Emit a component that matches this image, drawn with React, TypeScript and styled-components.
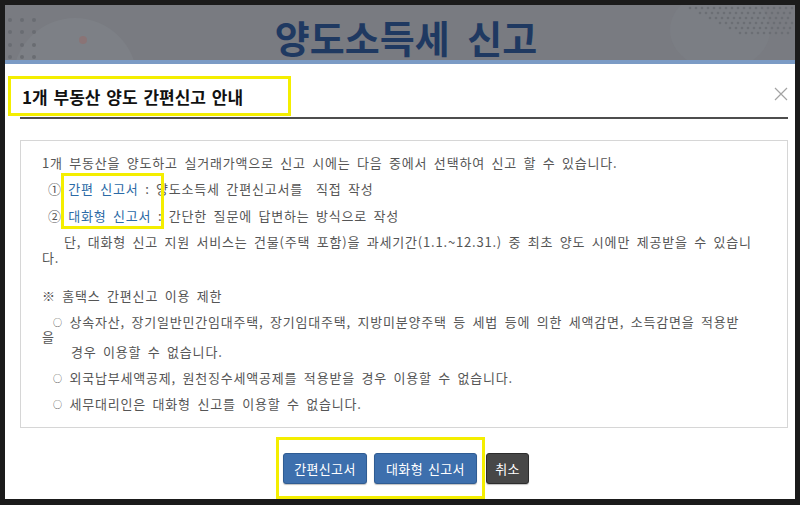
import React from 'react';
import styled, { createGlobalStyle } from 'styled-components';

const GlobalStyle = createGlobalStyle`
  html, body {
    margin: 0;
    padding: 0;
    background: #1b1b1b;
  }
  body {
    font-family: "Noto Sans CJK KR", "Noto Sans", sans-serif;
  }
`;

const Frame = styled.div`
  width: 800px;
  height: 505px;
  box-sizing: border-box;
  padding: 5px 5px 6px 5px;
  background: #1b1b1b;
  display: flex;
  flex-direction: column;
`;

const Backdrop = styled.div`
  position: relative;
  height: 55px;
  flex: none;
  background: #797b81;
  border-bottom: 4px solid #7b9bc5;
  overflow: hidden;
  display: flex;
  justify-content: center;
`;

const Decor = styled.svg`
  position: absolute;
  inset: 0;
  width: 100%;
  height: 100%;
`;

const BackdropTitle = styled.h1`
  position: relative;
  margin: 0 0 0 12px;
  padding-top: 12px;
  font-size: 38px;
  line-height: 40px;
  font-weight: 700;
  word-spacing: 9px;
  color: #1f3961;
  white-space: nowrap;
`;

const Modal = styled.div`
  flex: 1;
  background: #fff;
  display: flex;
  flex-direction: column;
  overflow: hidden;
`;

const Header = styled.div`
  display: flex;
  justify-content: space-between;
  padding: 12px 7px 0 3px;
`;

const TitleBox = styled.div`
  width: 283px;
  height: 40px;
  box-sizing: border-box;
  border: 3px solid #f4ee00;
  padding-left: 11px;
  display: flex;
  align-items: center;
`;

const Title = styled.h2`
  margin: 0;
  font-size: 17px;
  font-weight: 700;
  word-spacing: 2px;
  color: #111;
  white-space: nowrap;
`;

const CloseButton = styled.button`
  align-self: flex-start;
  margin-top: 11px;
  width: 14px;
  height: 14px;
  padding: 0;
  border: 0;
  background: none;
  cursor: pointer;
  display: flex;
`;

const Rule = styled.div`
  height: 2px;
  margin: 1px 7px 0 15px;
  background: #4d4d4d;
`;

const ContentBox = styled.div`
  position: relative;
  height: 291px;
  box-sizing: border-box;
  margin: 21px 7px 0 15px;
  padding: 14px 0 0 21px;
  border: 1px solid #d6d6d6;
  color: #555;
  font-size: 13px;
  letter-spacing: 0.8px;
  word-spacing: 2.8px;
`;

const Line = styled.p<{ $indent?: number; $lh?: number; $before?: number }>`
  margin: 0 0 10.5px 0;
  padding-top: ${(p) => p.$before ?? 0}px;
  line-height: ${(p) => p.$lh ?? 16}px;
  text-indent: ${(p) => p.$indent ?? 0}px;
  white-space: nowrap;
`;

const Continued = styled.span`
  display: block;
  padding-left: 29px;
  text-indent: 0;
`;

const Bullet = styled.span`
  display: inline-block;
  width: 10px;
  font-size: 9px;
  line-height: 1;
  letter-spacing: 0;
  color: #3f3f3f;
  text-indent: 0;
  vertical-align: 1px;
`;

const Form = styled.span`
  color: #2b6aa6;
`;

const Note = styled.div`
  position: absolute;
  left: 40px;
  top: 32px;
  width: 103px;
  height: 56px;
  box-sizing: border-box;
  border: 3px solid #f4ee00;
  pointer-events: none;
`;

const ButtonRow = styled.div`
  display: flex;
  justify-content: center;
  align-items: flex-start;
  padding: 9px 0 0 5px;
`;

const Marked = styled.div`
  display: flex;
  gap: 7px;
  padding: 13px 5px 12px 4px;
  border: 3px solid #f4ee00;
`;

const Button = styled.button<{ $dark?: boolean; $w: number }>`
  width: ${(p) => p.$w}px;
  height: 31px;
  padding: 0;
  margin: ${(p) => (p.$dark ? '16px 0 0 1px' : '0')};
  border: 1px solid ${(p) => (p.$dark ? '#2c2c2c' : '#2f5c93')};
  border-radius: 3px;
  background: ${(p) => (p.$dark ? '#474747' : '#3d6fad')};
  box-shadow: 0 1px 1px rgba(0, 0, 0, 0.25);
  color: #fff;
  font-family: "Noto Sans CJK KR", "Noto Sans", sans-serif;
  font-size: 13px;
  letter-spacing: 0.3px;
  word-spacing: 2px;
  cursor: pointer;
`;

const leftDots = [5, 17, 29].flatMap((x) => [15, 27, 40, 52].map((y) => ({ x, y })));

const rightDots: { x: number; y: number }[] = [];
[3, 8, 13, 18, 23, 28].forEach((y, row) => {
  for (let x = 685 + row * 10; x <= 788; x += 6) rightDots.push({ x, y });
});

export default function App() {
  return (
    <>
      <GlobalStyle />
      <Frame>
        <Backdrop>
          <Decor viewBox="0 0 790 55" preserveAspectRatio="none">
            <circle cx="70" cy="75" r="62" fill="#7d8086" />
            <ellipse cx="715" cy="25" rx="50" ry="40" fill="#7b7e84" />
            <circle cx="78" cy="35" r="4" fill="#8a7476" />
            {leftDots.map((d, i) => (
              <circle key={i} cx={d.x} cy={d.y} r="2" fill="#696c72" />
            ))}
            {rightDots.map((d, i) => (
              <circle key={'r' + i} cx={d.x} cy={d.y} r="1.3" fill="#6b6e74" />
            ))}
          </Decor>
          <BackdropTitle>양도소득세 신고</BackdropTitle>
        </Backdrop>
        <Modal>
          <Header>
            <TitleBox>
              <Title>1개 부동산 양도 간편신고 안내</Title>
            </TitleBox>
            <CloseButton aria-label="닫기">
              <svg width="14" height="14" viewBox="0 0 14 14">
                <path d="M1 1 L13 13 M13 1 L1 13" stroke="#a3a3a3" strokeWidth="1.2" fill="none" />
              </svg>
            </CloseButton>
          </Header>
          <Rule />
          <ContentBox>
            <Line>1개 부동산을 양도하고 실거래가액으로 신고 시에는 다음 중에서 선택하여 신고 할 수 있습니다.</Line>
            <Line $indent={6}>
              ① <Form>간편 신고서</Form> : 양도소득세 간편신고서를&nbsp; 직접 작성
            </Line>
            <Line $indent={6}>
              ② <Form>대화형 신고서</Form> : 간단한 질문에 답변하는 방식으로 작성
            </Line>
            <Line $indent={22}>
              단, 대화형 신고 지원 서비스는 건물(주택 포함)을 과세기간(1.1.~12.31.) 중 최초 양도 시에만 제공받을 수 있습니
              <br />
              다.
            </Line>
            <Line $before={11}>※ 홈택스 간편신고 이용 제한</Line>
            <Line $indent={11} $lh={15}>
              <Bullet>○</Bullet> 상속자산, 장기일반민간임대주택, 장기임대주택, 지방미분양주택 등 세법 등에 의한 세액감면, 소득감면을 적용받
              <br />
              을
              <Continued>경우 이용할 수 없습니다.</Continued>
            </Line>
            <Line $indent={11}>
              <Bullet>○</Bullet> 외국납부세액공제, 원천징수세액공제를 적용받을 경우 이용할 수 없습니다.
            </Line>
            <Line $indent={11}>
              <Bullet>○</Bullet> 세무대리인은 대화형 신고를 이용할 수 없습니다.
            </Line>
            <Note />
          </ContentBox>
          <ButtonRow>
            <Marked>
              <Button $w={84}>간편신고서</Button>
              <Button $w={103}>대화형 신고서</Button>
            </Marked>
            <Button $dark $w={43}>
              취소
            </Button>
          </ButtonRow>
        </Modal>
      </Frame>
    </>
  );
}
